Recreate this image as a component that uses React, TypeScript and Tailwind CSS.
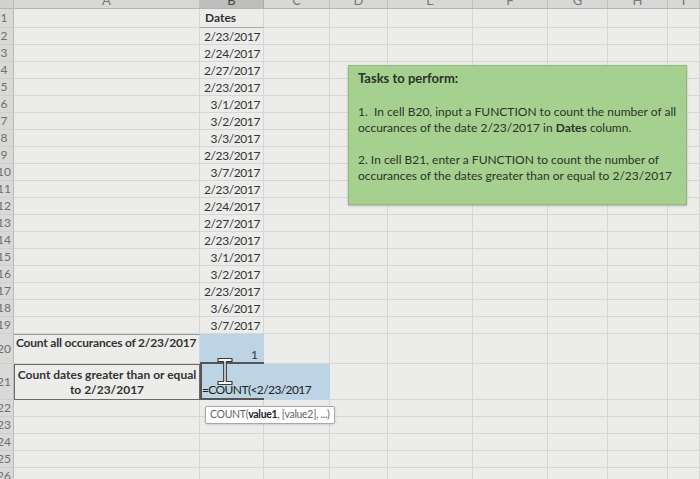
import React from "react";

const cols = ["A", "B", "C", "D", "E", "F", "G", "H", "I"];
const dates = [
  "2/23/2017", "2/24/2017", "2/27/2017", "2/23/2017", "3/1/2017", "3/2/2017",
  "3/3/2017", "2/23/2017", "3/7/2017", "2/23/2017", "2/24/2017", "2/27/2017",
  "2/23/2017", "3/1/2017", "3/2/2017", "2/23/2017", "3/6/2017", "3/7/2017",
];

const gridCols = "grid grid-cols-[14px_186px_64px_66px_58px_85px_75px_60px_60px_1fr]";
const font = { fontFamily: "Lato, 'Open Sans', sans-serif" };

function RowNum({ n }: { n: number }) {
  return (
    <div className="bg-[#d9d9d7] border-r border-[#b9b9b7] border-b border-b-[#cfcfcd] overflow-hidden flex items-center">
      <div className="w-[30px] -ml-[11px] shrink-0 text-center text-[12px] text-[#6f6f6f]">{n}</div>
    </div>
  );
}

function Blank() {
  return <div className="border-r border-b border-[#d6d6d4]" />;
}

function Blanks({ from }: { from: number }) {
  return (
    <>
      {cols.slice(from).map((c) => (
        <Blank key={c} />
      ))}
    </>
  );
}

function IBeam() {
  return (
    <svg width="16" height="29" viewBox="0 0 16 29" className="absolute left-[217px] top-[357px]">
      <path
        d="M1 1.5 H15 V4.5 H9.3 V24.5 H15 V27.5 H1 V24.5 H6.7 V4.5 H1 Z"
        fill="#fafafa"
        stroke="#3a3a3a"
        strokeWidth="1.2"
        strokeLinejoin="round"
      />
    </svg>
  );
}

export default function App() {
  return (
    <div className="relative w-[700px] h-[479px] overflow-hidden bg-[#ececea] text-[#2b2b2b]" style={font}>
      {/* column headers */}
      <div className={`${gridCols} h-[9px] bg-[#d8d8d6] border-b border-[#b5b5b3]`}>
        <div className="bg-[#d2d2d0] border-r border-[#bdbdbb]" />
        {cols.map((c) => (
          <div
            key={c}
            className={
              c === "B"
                ? "bg-[#bdbdbb] border-r border-[#a9a9a7] overflow-hidden flex justify-center"
                : "border-r border-[#c2c2c0] overflow-hidden flex justify-center"
            }
          >
            <span className={c === "B" ? "-mt-[7px] text-[13px] leading-[14px] text-[#444]" : "-mt-[7px] text-[13px] leading-[14px] text-[#777]"}>
              {c}
            </span>
          </div>
        ))}
      </div>

      {/* row 1 */}
      <div className={`${gridCols} h-[19px]`}>
        <RowNum n={1} />
        <Blank />
        <div className="border-r border-[#d6d6d4] border-b border-b-[#a8a8a6] flex items-end pl-[5px] text-[12px] font-bold text-[#333]">
          Dates
        </div>
        <Blanks from={2} />
      </div>

      {/* rows 2-19 */}
      {dates.map((d, i) => (
        <div key={i} className={`${gridCols} h-[17px]`}>
          <RowNum n={i + 2} />
          <Blank />
          <div className="border-r border-b border-[#d6d6d4] flex items-end justify-end pr-[3px] text-[12px] tracking-[-0.4px] leading-[15px] text-[#333]">
            {d}
          </div>
          <Blanks from={2} />
        </div>
      ))}

      {/* row 20 */}
      <div className={`${gridCols} h-[30px]`}>
        <RowNum n={20} />
        <div className="border-r border-[#d6d6d4] border-t border-t-[#9a9a98] border-b border-b-[#d6d6d4] pl-[2px] pt-[1px] text-[12px] tracking-[-0.2px] font-bold leading-[13px] text-[#333] whitespace-nowrap">
          Count all occurances of 2/23/2017
        </div>
        <div className="bg-[#bcd4e3] border-b-2 border-[#555] flex items-end justify-end pr-[6px] text-[12px] leading-[15px] text-[#333]">
          1
        </div>
        <Blanks from={2} />
      </div>

      {/* row 21 */}
      <div className={`${gridCols} h-[36px]`}>
        <RowNum n={21} />
        <div className="border border-[#6a6a68] flex items-center justify-center text-center text-[12px] font-bold leading-[15px] text-[#333]">
          Count dates greater than or equal
          <br />
          to 2/23/2017
        </div>
        <div className="col-span-2 bg-[#bcd4e3] flex items-end text-[#222]">
          <div className="w-[64px] h-full border-l-2 border-b-2 border-[#555] flex items-end whitespace-nowrap">
            <span className="text-[12px] tracking-[-0.6px] leading-[16px]">=COUNT(&lt;2/23/2017</span>
          </div>
        </div>
        <Blanks from={3} />
      </div>

      {/* rows 22-26 */}
      {[22, 23, 24, 25, 26].map((n) => (
        <div key={n} className={`${gridCols} h-[17px]`}>
          <RowNum n={n} />
          <Blanks from={0} />
        </div>
      ))}

      {/* tooltip */}
      <div className="absolute left-[205px] top-[406px] h-[18px] px-[4px] bg-white border border-[#a8a8a8] rounded-[2px] shadow-sm flex items-center text-[10.5px] tracking-[-0.3px] text-[#666] whitespace-nowrap">
        COUNT(<b className="text-[#222]">value1</b>, [value2], ...)
      </div>

      <IBeam />

      {/* task box */}
      <div className="absolute left-[348px] top-[65px] w-[339px] h-[140px] bg-[#a6d08f] border border-[#8fbb7a] shadow-[0_1px_2px_rgba(0,0,0,0.25)] px-[9px] pt-[4px] text-[12px] leading-[16px] text-[#2c3328]">
        <div className="font-bold text-[13px]">Tasks to perform:</div>
        <div className="mt-[18px]">
          1.&nbsp; In cell B20, input a FUNCTION to count the number of all
          <br />
          occurances of the date 2/23/2017 in <b>Dates</b> column.
        </div>
        <div className="mt-[16px]">
          2. In cell B21, enter a FUNCTION to count the number of
          <br />
          occurances of the dates greater than or equal to 2/23/2017
        </div>
      </div>
    </div>
  );
}
